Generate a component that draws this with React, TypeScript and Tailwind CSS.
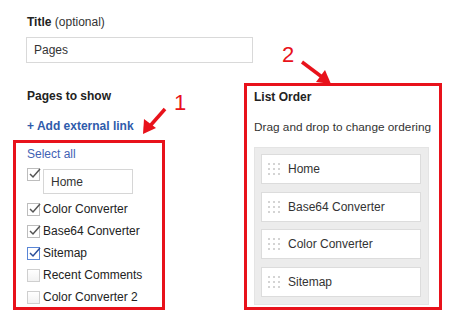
import React from "react";

const Check = ({ state }: { state: "gray" | "blue" | "off" }) => {
  if (state === "off") {
    return (
      <span className="block w-[13px] h-[13px] border border-[#cfcfcf] bg-gradient-to-b from-white to-[#f2f2f2] shrink-0" />
    );
  }
  const border = state === "blue" ? "border-[#5a86d6]" : "border-[#bdbdbd]";
  const stroke = state === "blue" ? "#2c4f9a" : "#555";
  return (
    <span className={`relative block w-[13px] h-[13px] border ${border} bg-white shrink-0`}>
      <svg className="absolute left-[0px] top-[-2px]" width="14" height="13" viewBox="0 0 14 13">
        <polyline points="2,7 5,10 12,2" fill="none" stroke={stroke} strokeWidth="1.5" />
      </svg>
    </span>
  );
};

const Row = ({ label, state }: { label: string; state: "gray" | "blue" | "off" }) => (
  <div className="flex items-center h-[22px] gap-[3px]">
    <Check state={state} />
    <span className="text-[#222]">{label}</span>
  </div>
);

const Handle = () => (
  <div className="grid grid-cols-3 gap-x-[3px] gap-y-[3px] w-[12px]">
    {Array.from({ length: 9 }).map((_, i) => (
      <span key={i} className="block w-[2px] h-[2px] bg-[#d4d4d4]" />
    ))}
  </div>
);

const Item = ({ label }: { label: string }) => (
  <div className="flex items-center h-[30px] border border-[#dcdcdc] bg-white pl-[6px] gap-[8px]">
    <Handle />
    <span className="text-[#333]">{label}</span>
  </div>
);

export default function App() {
  return (
    <div
      className="relative w-[474px] h-[313px] bg-white overflow-hidden flex text-[12px] leading-[16px] text-[#222] whitespace-nowrap"
      style={{ fontFamily: '"Liberation Sans", Arial, sans-serif' }}
    >
      {/* Left column */}
      <div className="w-[231px] ml-[13px] shrink-0 flex flex-col">
        <div className="ml-[14px] mt-[14px]">
          <span className="font-bold">Title</span> <span className="text-[#333]">(optional)</span>
        </div>
        <div className="ml-[13px] mt-[7px] w-[227px] h-[26px] border border-[#d9d9d9] flex items-center pl-[7px] text-[#333] bg-white">
          Pages
        </div>
        <div className="ml-[14px] mt-[25px] font-bold">Pages to show</div>
        <div className="ml-[14px] mt-[14px] font-bold text-[#2f5bab]">+ Add external link</div>
        <div className="mt-[6px] w-[152px] h-[170px] border-[3px] border-[#e8121b] pl-[11px] pt-[3px]">
          <div className="text-[#3f62b4]">Select all</div>
          <div className="flex items-start mt-[6px] gap-[3px] h-[26px]">
            <Check state="gray" />
            <div className="w-[90px] h-[25px] mt-[1px] border border-[#d6d6d6] flex items-center pl-[7px] text-[#333]">
              Home
            </div>
          </div>
          <div className="mt-[4px]">
            <Row label="Color Converter" state="gray" />
            <Row label="Base64 Converter" state="gray" />
            <Row label="Sitemap" state="blue" />
            <Row label="Recent Comments" state="off" />
            <Row label="Color Converter 2" state="off" />
          </div>
        </div>
      </div>

      {/* Right column */}
      <div className="mt-[83px] w-[198px] h-[227px] border-[3px] border-[#e8121b] pl-[7px] pt-[3px] shrink-0">
        <div className="font-bold">List Order</div>
        <div className="mt-[14px] text-[#333] text-[11.8px]">Drag and drop to change ordering</div>
        <div className="mt-[12px] w-[175px] h-[158px] bg-[#ececec] border border-[#e4e4e4] pl-[6px] pt-[6px]">
          <div className="w-[160px] flex flex-col gap-[7.5px]">
            <Item label="Home" />
            <Item label="Base64 Converter" />
            <Item label="Color Converter" />
            <Item label="Sitemap" />
          </div>
        </div>
      </div>

      {/* Annotations */}
      <span className="absolute left-[174px] top-[92px] text-[22px] leading-[22px] text-[#e8121b]">1</span>
      <span className="absolute left-[282px] top-[44px] text-[22px] leading-[22px] text-[#e8121b]">2</span>
      <svg className="absolute left-0 top-0 pointer-events-none" width="474" height="313">
        <line x1="165" y1="109" x2="150" y2="126" stroke="#e8121b" strokeWidth="3.5" />
        <polygon points="143,134 144,119 156,128" fill="#e8121b" />
        <line x1="302" y1="62" x2="322" y2="77" stroke="#e8121b" strokeWidth="3.5" />
        <polygon points="331,84 316,82 325,70" fill="#e8121b" />
      </svg>
    </div>
  );
}
